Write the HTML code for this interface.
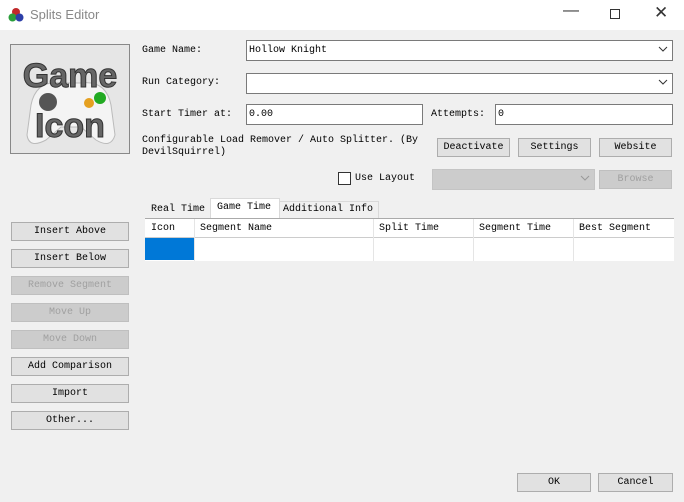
<!DOCTYPE html><html><head><style>
*{box-sizing:border-box}body{margin:0;width:684px;height:502px;background:#f0f0f0;font:10px "Liberation Mono",monospace;color:#000;position:relative;overflow:hidden}
.a{position:absolute}
.t{position:absolute;white-space:pre}
.btn{position:absolute;background:#e1e1e1;border:1px solid #adadad;text-align:center;line-height:17px;height:19px}
.dis{color:#a0a0a0;background:#cccccc;border-color:#bfbfbf}
.in{position:absolute;background:#fff;border:1px solid #7a7a7a;height:21px;padding:3px 2px;line-height:13px}
.chev{position:absolute;right:4px;top:3px;width:10px;height:10px}
.col{position:absolute;top:0;height:42px;border-left:1px solid #e5e5e5}
</style></head><body>
<div class="a" style="left:0;top:0;width:684px;height:30px;background:#fff"></div>
<svg class="a" style="left:8px;top:7px" width="16" height="16"><circle cx="8" cy="5" r="4" fill="#c0282a"/><circle cx="4.5" cy="10.5" r="4" fill="#2a9e3a"/><circle cx="11.5" cy="10.5" r="4" fill="#2c3ea8"/></svg>
<div class="t" style="left:30px;top:7px;font:13px 'Liberation Sans',sans-serif;color:#888">Splits Editor</div>
<div class="t" style="left:563px;top:2px;font:16px 'Liberation Sans';color:#333">—</div>
<div class="a" style="left:610px;top:9px;width:10px;height:10px;border:1px solid #333"></div>
<div class="t" style="left:654px;top:3px;font:17px 'Liberation Sans';color:#333">✕</div>

<div class="a" style="left:10px;top:44px;width:120px;height:110px;border:1px solid #888;background:#e6e6e6;overflow:hidden">
<svg width="118" height="108"><path d="M20 60 Q25 35 50 38 L70 38 Q95 35 100 60 L104 90 Q100 104 85 95 L70 82 L50 82 L35 95 Q18 104 16 90Z" fill="#f4f4f4" stroke="#bbb"/><circle cx="37" cy="57" r="9" fill="#555"/><circle cx="89" cy="53" r="6" fill="#2a2"/><circle cx="78" cy="58" r="5" fill="#e5a020"/><text x="59" y="42" text-anchor="middle" font-family="Liberation Sans" font-size="34" font-weight="bold" fill="#666" stroke="#333">Game</text><text x="59" y="92" text-anchor="middle" font-family="Liberation Sans" font-size="34" font-weight="bold" fill="#666" stroke="#333">Icon</text></svg></div>

<div class="t" style="left:142px;top:45px">Game Name:</div>
<div class="t" style="left:142px;top:77px">Run Category:</div>
<div class="t" style="left:142px;top:109px">Start Timer at:</div>
<div class="t" style="left:142px;top:135px;line-height:12px">Configurable Load Remover / Auto Splitter. (By
DevilSquirrel)</div>
<div class="in" style="left:246px;top:40px;width:427px">Hollow Knight<svg class="chev" viewBox="0 0 10 10"><path d="M1 3l4 4 4-4" fill="none" stroke="#333"/></svg></div>
<div class="in" style="left:246px;top:73px;width:427px"><svg class="chev" viewBox="0 0 10 10"><path d="M1 3l4 4 4-4" fill="none" stroke="#333"/></svg></div>
<div class="in" style="left:246px;top:104px;width:177px">0.00</div>
<div class="t" style="left:431px;top:109px">Attempts:</div>
<div class="in" style="left:495px;top:104px;width:178px">0</div>
<div class="btn" style="left:437px;top:138px;width:73px">Deactivate</div>
<div class="btn" style="left:518px;top:138px;width:73px">Settings</div>
<div class="btn" style="left:599px;top:138px;width:73px">Website</div>
<div class="a" style="left:338px;top:172px;width:13px;height:13px;border:1px solid #333;background:#fff"></div>
<div class="t" style="left:355px;top:173px">Use Layout</div>
<div class="a" style="left:432px;top:169px;width:163px;height:21px;background:#ccc;border:1px solid #c4c4c4"><svg class="chev" viewBox="0 0 10 10"><path d="M1 3l4 4 4-4" fill="none" stroke="#999"/></svg></div>
<div class="btn dis" style="left:599px;top:170px;width:73px">Browse</div>

<div class="t" style="left:151px;top:204px">Real Time</div>
<div class="a" style="left:210px;top:198px;width:70px;height:21px;background:#fff;border:1px solid #d9d9d9;border-bottom:none"></div>
<div class="t" style="left:217px;top:202px">Game Time</div>
<div class="a" style="left:279px;top:201px;width:100px;height:18px;border:1px solid #d9d9d9;border-bottom:none"></div>
<div class="t" style="left:283px;top:204px">Additional Info</div>
<div class="a" style="left:145px;top:218px;width:529px;height:43px;background:#fff;border-top:1px solid #aaa">
<div class="a" style="left:0;top:18px;width:529px;border-top:1px solid #ccc"></div>
<div class="a" style="left:0;top:19px;width:49px;height:22px;background:#0078d7"></div>
<div class="col" style="left:49px"></div><div class="col" style="left:228px"></div><div class="col" style="left:328px"></div><div class="col" style="left:428px"></div>
<div class="t" style="left:6px;top:4px">Icon</div><div class="t" style="left:55px;top:4px">Segment Name</div><div class="t" style="left:234px;top:4px">Split Time</div><div class="t" style="left:334px;top:4px">Segment Time</div><div class="t" style="left:434px;top:4px">Best Segment</div>
</div>

<div class="btn" style="left:11px;top:222px;width:118px">Insert Above</div>
<div class="btn" style="left:11px;top:249px;width:118px">Insert Below</div>
<div class="btn dis" style="left:11px;top:276px;width:118px">Remove Segment</div>
<div class="btn dis" style="left:11px;top:303px;width:118px">Move Up</div>
<div class="btn dis" style="left:11px;top:330px;width:118px">Move Down</div>
<div class="btn" style="left:11px;top:357px;width:118px">Add Comparison</div>
<div class="btn" style="left:11px;top:384px;width:118px">Import</div>
<div class="btn" style="left:11px;top:411px;width:118px">Other...</div>
<div class="btn" style="left:517px;top:473px;width:74px">OK</div>
<div class="btn" style="left:598px;top:473px;width:75px">Cancel</div>
</body></html>
